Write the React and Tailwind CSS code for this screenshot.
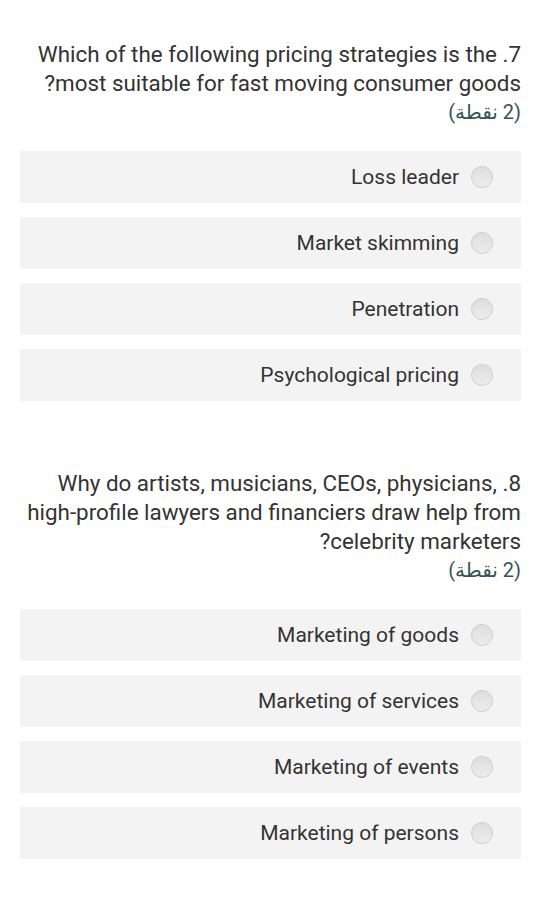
import React from "react";

const font = { fontFamily: 'Roboto, "DejaVu Sans", "Liberation Sans", sans-serif' };

function Option({ label }) {
  return (
    <div className="flex h-[52px] items-center gap-[12px] bg-[#f3f3f3] pr-[28px]">
      <span className="h-[22px] w-[22px] shrink-0 rounded-full border border-[#cfcfcf] bg-[linear-gradient(180deg,#dedede,#ececec)]" />
      <span className="text-[21px] leading-[29px] text-[#333333]">{label}</span>
    </div>
  );
}

function Question({ text, options, className }) {
  return (
    <div className={className}>
      <div className="text-[22.4px] leading-[29px] text-[#333333]">{text}</div>
      <div className="text-[20px] leading-[29px] text-[#335555]">(2 نقطة)</div>
      <div className="mt-[24px] flex flex-col gap-[14px]">
        {options.map((o) => (
          <Option key={o} label={o} />
        ))}
      </div>
    </div>
  );
}

export default function App() {
  return (
    <div dir="rtl" style={font} className="min-h-[912px] w-[540px] bg-white pl-[20px] pr-[19px] pt-[40px]">
      <Question
        text="7. Which of the following pricing strategies is the most suitable for fast moving consumer goods?"
        options={["Loss leader", "Market skimming", "Penetration", "Psychological pricing"]}
      />
      <Question
        className="mt-[68px]"
        text={
          <>
            8. Why do artists, musicians, CEOs, physicians,{" "}
            <span className="whitespace-nowrap">high-profile</span> lawyers and financiers draw help from celebrity marketers?
          </>
        }
        options={[
          "Marketing of goods",
          "Marketing of services",
          "Marketing of events",
          "Marketing of persons",
        ]}
      />
    </div>
  );
}
